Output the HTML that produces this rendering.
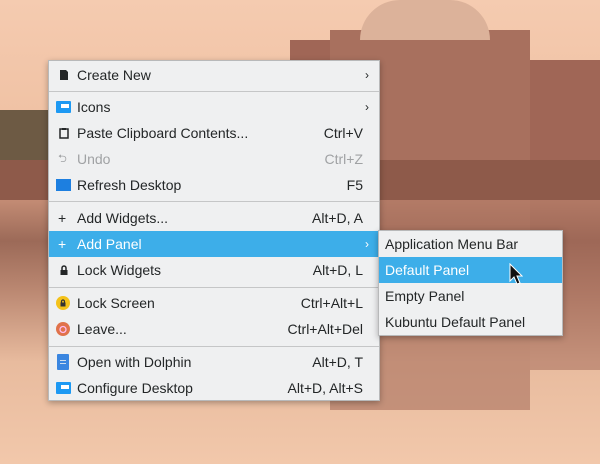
<!DOCTYPE html>
<html><head><style>
body{margin:0;width:600px;height:464px;overflow:hidden;position:relative;font-family:"Liberation Sans",sans-serif;font-size:14px;color:#232627;
background:linear-gradient(180deg,#f5cbb0 0%,#efc0a2 30%,#c89078 42%,#9c6a58 52%,#b98670 62%,#e8bb9e 78%,#f2c8ab 100%);}
.bld{position:absolute;background:#a5695a;}
.menu{position:absolute;background:#eff0f1;border:1px solid #b8b9ba;box-shadow:0 2px 6px rgba(0,0,0,.3);}
.it{position:absolute;left:0;right:0;height:26px;line-height:26px;}
.it .t{position:absolute;left:28px}
.it .k{position:absolute;right:16px}
.it .a{position:absolute;right:10px;font-size:12px}
.sel{background:#3daee9;color:#fff}
.sep{position:absolute;left:0;right:0;height:1px;background:#c5c6c7}
.ic{position:absolute;left:9px;top:7px;width:12px;height:12px}
.dis{color:#a0a2a4}
</style></head><body>
<div class="bld" style="left:0;top:110px;width:48px;height:90px;background:#6d5a44"></div>
<div class="bld" style="left:330px;top:30px;width:200px;height:140px;background:#a8705e"></div>
<div class="bld" style="left:360px;top:0;width:130px;height:40px;border-radius:60px 60px 0 0;background:#dcb29a"></div>
<div class="bld" style="left:290px;top:40px;width:40px;height:140px;background:#a06656"></div>
<div class="bld" style="left:530px;top:60px;width:70px;height:120px;background:#a06656"></div>
<div class="bld" style="left:0;top:160px;width:600px;height:40px;background:#8e5a4a"></div>
<div class="bld" style="left:330px;top:200px;width:200px;height:210px;background:#a8705e;opacity:.6"></div>
<div class="bld" style="left:530px;top:200px;width:70px;height:170px;background:#a06656;opacity:.5"></div>

<div class="menu" style="left:48px;top:60px;width:330px;height:339px">
<div class="it" style="top:1px"><svg class="ic" viewBox="0 0 12 12"><path d="M2 1h6l2 2v8H2z" fill="#232627"/></svg><span class="t">Create New</span><span class="a">&#x203A;</span></div>
<div class="sep" style="top:30px"></div>
<div class="it" style="top:33px"><svg class="ic" style="left:7px;width:15px" viewBox="0 0 15 12"><rect width="15" height="12" rx="1" fill="#1d99f3"/><rect x="5" y="3" width="8" height="4" fill="#fff"/></svg><span class="t">Icons</span><span class="a">&#x203A;</span></div>
<div class="it" style="top:59px"><svg class="ic" viewBox="0 0 12 12"><rect x="2" y="2" width="8" height="9" fill="none" stroke="#232627" stroke-width="1.5"/><rect x="4" y="1" width="4" height="2" fill="#232627"/></svg><span class="t">Paste Clipboard Contents...</span><span class="k">Ctrl+V</span></div>
<div class="it dis" style="top:85px"><span class="ic" style="font-size:11px;line-height:12px">&#x2B8C;</span><span class="t">Undo</span><span class="k">Ctrl+Z</span></div>
<div class="it" style="top:111px"><svg class="ic" style="left:7px;width:15px" viewBox="0 0 15 12"><rect width="15" height="12" fill="#1d7fe0"/></svg><span class="t">Refresh Desktop</span><span class="k">F5</span></div>
<div class="sep" style="top:140px"></div>
<div class="it" style="top:144px"><span class="ic" style="line-height:12px">+</span><span class="t">Add Widgets...</span><span class="k">Alt+D, A</span></div>
<div class="it sel" style="top:170px"><span class="ic" style="line-height:12px">+</span><span class="t">Add Panel</span><span class="a">&#x203A;</span></div>
<div class="it" style="top:196px"><svg class="ic" viewBox="0 0 12 12"><path d="M4 6V4a2 2 0 0 1 4 0v2" fill="none" stroke="#232627" stroke-width="1.5"/><rect x="2.5" y="6" width="7" height="5" fill="#232627"/></svg><span class="t">Lock Widgets</span><span class="k">Alt+D, L</span></div>
<div class="sep" style="top:226px"></div>
<div class="it" style="top:229px"><svg class="ic" style="left:7px;top:6px;width:14px;height:14px" viewBox="0 0 14 14"><circle cx="7" cy="7" r="7" fill="#f4c21a"/><rect x="4.5" y="6.5" width="5" height="4" fill="#333"/><path d="M5.5 7V5.5a1.5 1.5 0 0 1 3 0V7" fill="none" stroke="#333" stroke-width="1.2"/></svg><span class="t">Lock Screen</span><span class="k">Ctrl+Alt+L</span></div>
<div class="it" style="top:255px"><svg class="ic" style="left:7px;top:6px;width:14px;height:14px" viewBox="0 0 14 14"><circle cx="7" cy="7" r="7" fill="#e0724a"/><circle cx="7" cy="7.5" r="3" fill="none" stroke="#fbe" stroke-width="1.3"/></svg><span class="t">Leave...</span><span class="k">Ctrl+Alt+Del</span></div>
<div class="sep" style="top:285px"></div>
<div class="it" style="top:288px"><svg class="ic" style="left:8px;top:5px;width:12px;height:16px" viewBox="0 0 12 16"><rect width="12" height="16" rx="1" fill="#3a86e0"/><rect x="3" y="6" width="6" height="1" fill="#cde"/><rect x="3" y="9" width="6" height="1" fill="#cde"/></svg><span class="t">Open with Dolphin</span><span class="k">Alt+D, T</span></div>
<div class="it" style="top:314px"><svg class="ic" style="left:7px;width:15px" viewBox="0 0 15 12"><rect width="15" height="12" rx="1" fill="#1d99f3"/><rect x="5" y="3" width="8" height="4" fill="#fff"/></svg><span class="t">Configure Desktop</span><span class="k">Alt+D, Alt+S</span></div>
</div>

<div class="menu" style="left:378px;top:230px;width:183px;height:104px">
<div class="it" style="top:0"><span class="t" style="left:6px">Application Menu Bar</span></div>
<div class="it sel" style="top:26px"><span class="t" style="left:6px">Default Panel</span></div>
<div class="it" style="top:52px"><span class="t" style="left:6px">Empty Panel</span></div>
<div class="it" style="top:78px"><span class="t" style="left:6px">Kubuntu Default Panel</span></div>
</div>
<svg style="position:absolute;left:509px;top:263px" width="14" height="22" viewBox="0 0 14 22"><path d="M1 1v17l4-4 3 7 3-1-3-7h5z" fill="#111" stroke="#fff" stroke-width="1"/></svg>
</body></html>
